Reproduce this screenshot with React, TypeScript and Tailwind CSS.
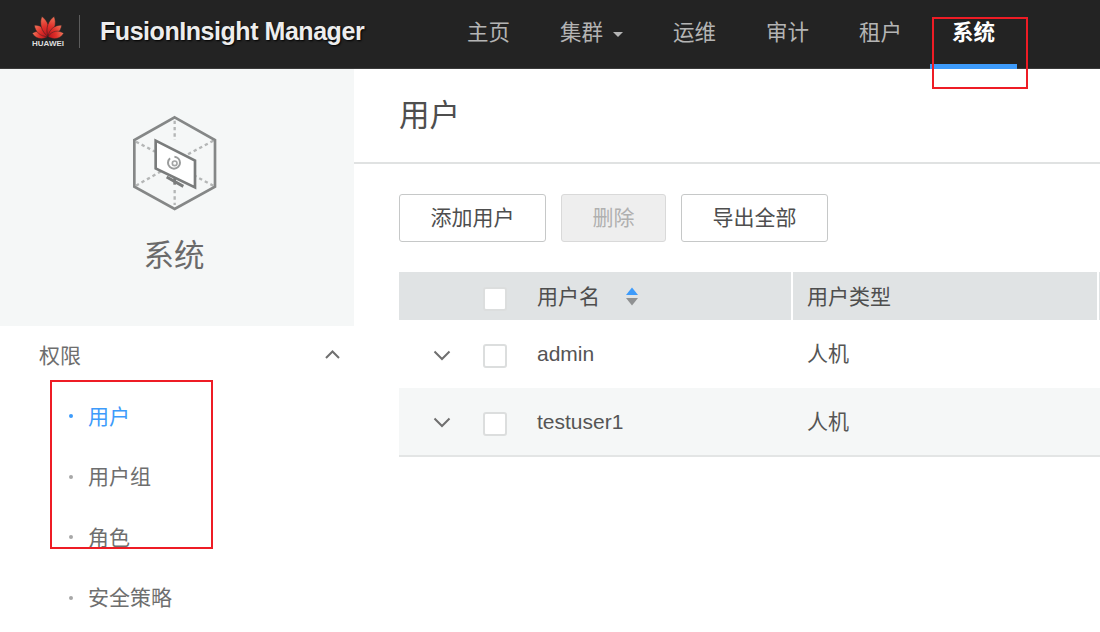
import React from "react";

const FONT = "font-['Liberation_Sans','Noto_Sans_CJK_SC',sans-serif]";

function Logo() {
  const petals: [number, number][] = [[-78, 0.76], [-50, 0.84], [-17, 1], [17, 1], [50, 0.84], [78, 0.76]];
  return (
    <div className="flex flex-col items-center w-[34px] h-[33px]">
      <svg width="34" height="25" viewBox="0 0 34 25">
        <defs>
          <linearGradient id="petal" x1="0" y1="0" x2="0" y2="1">
            <stop offset="0" stopColor="#f0785c" />
            <stop offset="0.5" stopColor="#e0302a" />
            <stop offset="1" stopColor="#b8121c" />
          </linearGradient>
        </defs>
        {petals.map(([a, s], i) => (
          <path
            key={i}
            d="M17 22.5 C11.5 15 12.5 6 17 0.5 C21.5 6 22.5 15 17 22.5 Z"
            fill="url(#petal)"
            stroke="#232323"
            strokeWidth="0.5"
            transform={`rotate(${a} 17 22.5) translate(17 22.5) scale(1 ${s}) translate(-17 -22.5)`}
          />
        ))}
      </svg>
      <span className="mt-px text-[8px] leading-[8px] font-bold text-[#dddddd]">HUAWEI</span>
    </div>
  );
}

function SystemIcon() {
  return (
    <svg width="150" height="140" viewBox="0 0 450 420">
      <g fill="none" stroke="#b4b6b6" strokeWidth="7" strokeDasharray="10 9">
        <path d="M224 92 V150" />
        <path d="M224 300 V345" />
        <path d="M108 155 L165 185" />
        <path d="M340 152 L258 196" />
        <path d="M108 287 L190 240" />
        <path d="M340 287 L285 258" />
      </g>
      <path d="M224 82 L345 150 V290 L224 357 L103 290 V150 Z" fill="none" stroke="#858787" strokeWidth="8" />
      <path d="M167 152 L285 212 V292 L167 235 Z" fill="#ffffff" stroke="#7a7c7c" strokeWidth="8" />
      <circle cx="222" cy="218" r="18" fill="none" stroke="#9a9c9c" strokeWidth="6" strokeDasharray="70 14" />
      <circle cx="224" cy="220" r="7" fill="none" stroke="#a4a6a6" strokeWidth="5" />
      <path d="M224 262 V284" stroke="#7a7c7c" strokeWidth="8" />
      <path d="M200 261 L250 289" stroke="#7a7c7c" strokeWidth="9" />
    </svg>
  );
}

function Chevron({ up = false, className = "" }: { up?: boolean; className?: string }) {
  return up ? (
    <svg width="15" height="9" viewBox="0 0 15 9" className={className}>
      <path d="M1 8 L7.5 1.5 L14 8" fill="none" stroke="#6f6f6f" strokeWidth="2" />
    </svg>
  ) : (
    <svg width="18" height="11" viewBox="0 0 18 11" className={className}>
      <path d="M1.5 1.5 L9 9 L16.5 1.5" fill="none" stroke="#6f6f6f" strokeWidth="2" />
    </svg>
  );
}

function Checkbox({ className = "" }: { className?: string }) {
  return <div className={`w-6 h-6 bg-white border-2 border-[#dcdede] rounded-[3px] shrink-0 ${className}`} />;
}

function NavItem({ label, caret = false, active = false }: { label: string; caret?: boolean; active?: boolean }) {
  return (
    <div className={`flex items-center h-[69px] pb-[3px] relative text-[21.5px] ${active ? "font-bold text-white" : "text-[#b4b4b4]"}`}>
      <span>{label}</span>
      {caret && <span className="ml-[10px] mt-[2px] w-0 h-0 border-x-[5px] border-x-transparent border-t-[5px] border-t-[#b4b4b4]" />}
      {active && <span className="absolute left-[-22px] right-[-22px] bottom-0 h-[5px] bg-[#3d9bfb]" />}
    </div>
  );
}

function SideItem({ label, active = false }: { label: string; active?: boolean }) {
  return (
    <div className={`flex items-center h-[60.5px] pl-[69px] text-[21px] ${active ? "text-[#3d9bfb]" : "text-[#6e6e6e]"}`}>
      <span className={`w-1 h-1 rounded-full mr-[15px] ${active ? "bg-[#3d9bfb]" : "bg-[#a8a8a8]"}`} />
      <span>{label}</span>
    </div>
  );
}

function Btn({ label, w, disabled = false }: { label: string; w: string; disabled?: boolean }) {
  return (
    <div className={`${w} h-12 flex items-center justify-center rounded-[3px] border text-[21px] ${disabled ? "bg-[#eeeeee] border-[#d9d9d9] text-[#b0b0b0]" : "bg-white border-[#c6c8c8] text-[#4e4e4e]"}`}>
      {label}
    </div>
  );
}

function Row({ name, alt = false }: { name: string; alt?: boolean }) {
  return (
    <div className={`flex items-center text-[21px] text-[#555555] ${alt ? "h-[69px] bg-[#f5f7f7] border-b-2 border-[#e3e5e5]" : "h-[68px] bg-white"}`}>
      <div className="w-[84px] flex pl-[34px] mt-[2px]"><Chevron /></div>
      <Checkbox className="mt-[4px]" />
      <div className="w-[286px] pl-[30px]">{name}</div>
      <div className="pl-[14px]">人机</div>
    </div>
  );
}

export default function App() {
  return (
    <div className={`${FONT} relative w-[1100px] h-[632px] overflow-hidden bg-white flex flex-col`}>
      <header className="h-[69px] bg-[#232323] flex items-center shrink-0 border-b border-[#3a3a3a]">
        <div className="ml-[31px] flex items-center mb-[5px]">
          <Logo />
          <div className="w-px h-[33px] bg-[#5c5c5c] ml-[14px]" />
          <span className="ml-5 w-[320px] text-[25px] font-bold text-[#ededed] tracking-[-0.45px] [text-shadow:1px_1px_2px_#000]">FusionInsight Manager</span>
        </div>
        <nav className="ml-[47px] flex gap-[50px] -mb-px">
          <NavItem label="主页" />
          <NavItem label="集群" caret />
          <NavItem label="运维" />
          <NavItem label="审计" />
          <NavItem label="租户" />
          <NavItem label="系统" active />
        </nav>
      </header>

      <div className="flex flex-1 min-h-0">
        <aside className="w-[354px] shrink-0">
          <div className="h-[257px] bg-[#f5f7f7] flex flex-col items-center pt-[21px] pr-[4px]">
            <SystemIcon />
            <div className="mt-[7px] mr-[2px] text-[30.5px] leading-9 text-[#6a6a6a]">系统</div>
          </div>
          <div className="h-[60px] flex items-center justify-between pl-[39px] pr-[14px] text-[21px] text-[#6e6e6e]">
            <span>权限</span>
            <Chevron up className="-mt-[3px]" />
          </div>
          <div>
            <SideItem label="用户" active />
            <SideItem label="用户组" />
            <SideItem label="角色" />
            <SideItem label="安全策略" />
          </div>
        </aside>

        <main className="flex-1 min-w-0">
          <div className="h-[95px] border-b-2 border-[#e0e2e2] flex items-center pl-[45px] text-[30.5px] text-[#4e4e4e]">用户</div>
          <div className="pl-[45px] pt-[30px]">
            <div className="flex gap-[15px]">
              <Btn label="添加用户" w="w-[147px]" />
              <Btn label="删除" w="w-[105px]" disabled />
              <Btn label="导出全部" w="w-[147px]" />
            </div>
            <div className="mt-[30px]">
              <div className="flex items-center h-12 bg-[#e0e3e4] text-[21px] text-[#4e4e4e]">
                <div className="w-[84px]" />
                <Checkbox className="mt-[6px]" />
                <div className="w-[286px] h-full flex items-center pl-[30px] border-r-2 border-white">
                  <span className="mt-px">用户名</span>
                  <svg width="12" height="19" viewBox="0 0 12 19" className="ml-[26px] mt-px">
                    <path d="M6 0.5 L12 8 H0 Z" fill="#3d9bfb" />
                    <path d="M0 11 H12 L6 18.5 Z" fill="#8f9192" />
                  </svg>
                </div>
                <div className="w-[306px] h-full flex items-center pl-[14px] border-r-2 border-white">
                  <span className="mt-px">用户类型</span>
                </div>
              </div>
              <Row name="admin" />
              <Row name="testuser1" alt />
            </div>
          </div>
        </main>
      </div>

      <div className="absolute left-[932px] top-[17px] w-[96px] h-[72px] border-2 border-[#ee1c25]" />
      <div className="absolute left-[50px] top-[380px] w-[163px] h-[169px] border-2 border-[#ee1c25]" />
    </div>
  );
}
